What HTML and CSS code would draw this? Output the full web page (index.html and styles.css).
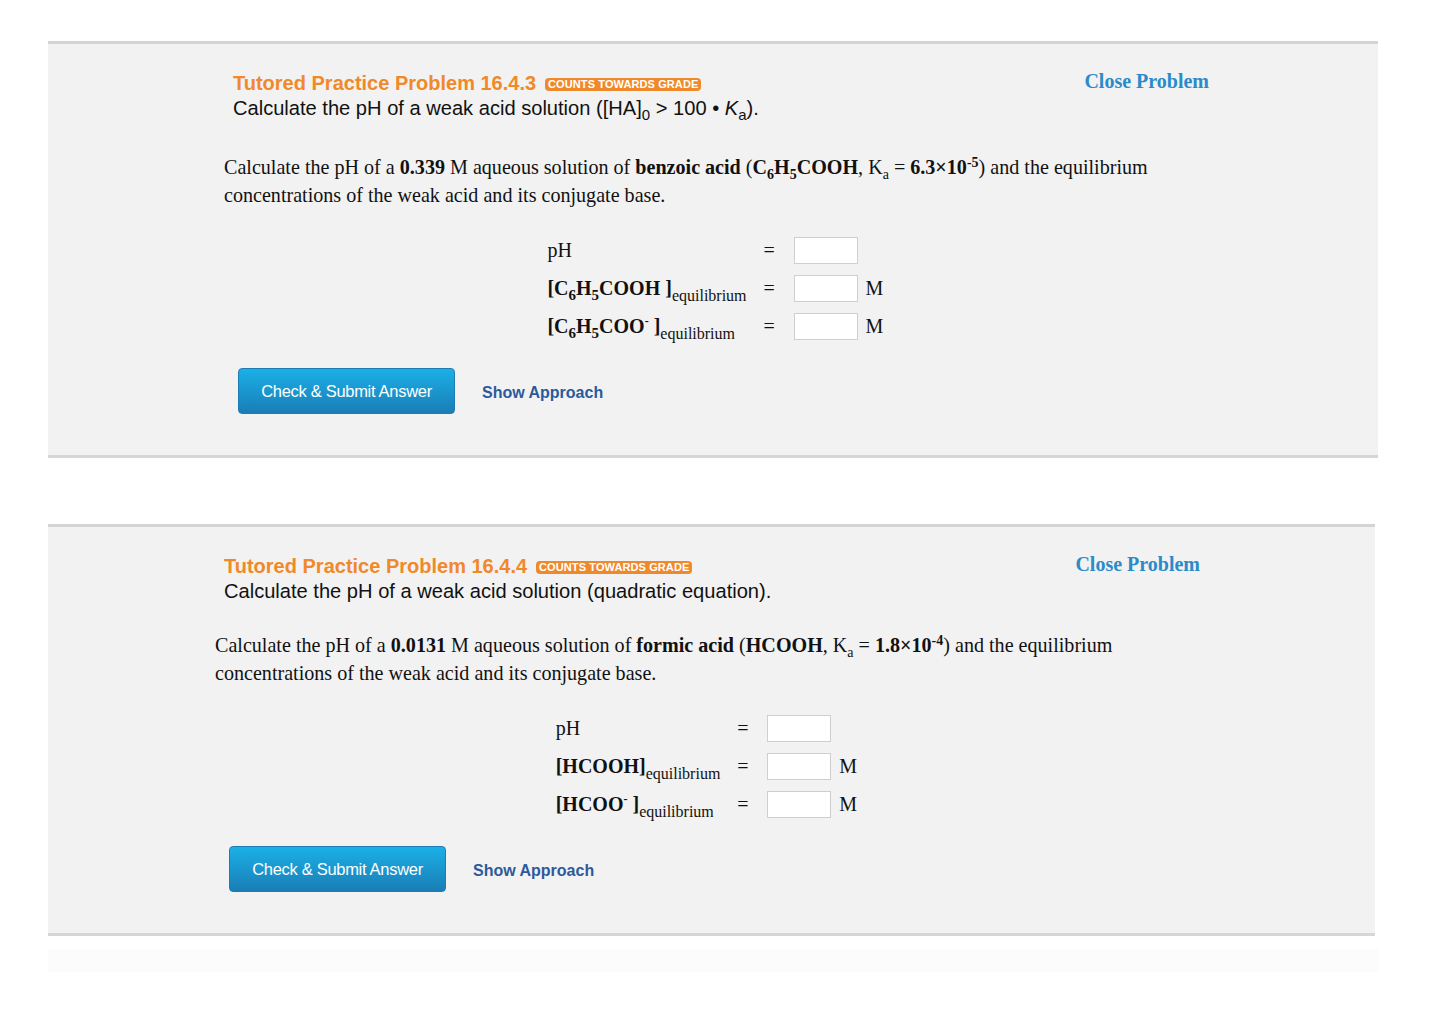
FILE: index.html
```html
<!DOCTYPE html>
<html>
<head>
<meta charset="utf-8">
<link rel="stylesheet" href="styles.css">
</head>
<body>
<div class="page">
  <section class="panel panel-a">
    <div class="content">
      <div class="head">
        <div class="titles">
          <div class="title-line"><span class="title">Tutored Practice Problem 16.4.3</span><span class="badge">COUNTS TOWARDS GRADE</span></div>
          <div class="subtitle">Calculate the pH of a weak acid solution ([HA]<sub>0</sub> &gt; 100 • <i>K</i><sub>a</sub>).</div>
        </div>
        <a class="close">Close Problem</a>
      </div>
      <p class="question">Calculate the pH of a <b>0.339</b> M aqueous solution of <b>benzoic acid</b> (<b>C<sub>6</sub>H<sub>5</sub>COOH</b>, K<sub>a</sub> = <b>6.3×10<sup>-5</sup></b>) and the equilibrium concentrations of the weak acid and its conjugate base.</p>
      <table class="answers">
        <tr><td class="lbl">pH</td><td class="eq">=</td><td><span class="box"></span></td><td class="unit"></td></tr>
        <tr><td class="lbl"><b>[C<sub>6</sub>H<sub>5</sub>COOH ]</b><sub>equilibrium</sub></td><td class="eq">=</td><td><span class="box"></span></td><td class="unit">M</td></tr>
        <tr><td class="lbl"><b>[C<sub>6</sub>H<sub>5</sub>COO<sup>-</sup> ]</b><sub>equilibrium</sub></td><td class="eq">=</td><td><span class="box"></span></td><td class="unit">M</td></tr>
      </table>
      <div class="actions">
        <button class="submit">Check &amp; Submit Answer</button>
        <a class="approach">Show Approach</a>
      </div>
    </div>
  </section>

  <section class="panel panel-b">
    <div class="content">
      <div class="head">
        <div class="titles">
          <div class="title-line"><span class="title">Tutored Practice Problem 16.4.4</span><span class="badge">COUNTS TOWARDS GRADE</span></div>
          <div class="subtitle">Calculate the pH of a weak acid solution (quadratic equation).</div>
        </div>
        <a class="close">Close Problem</a>
      </div>
      <p class="question">Calculate the pH of a <b>0.0131</b> M aqueous solution of <b>formic acid</b> (<b>HCOOH</b>, K<sub>a</sub> = <b>1.8×10<sup>-4</sup></b>) and the equilibrium concentrations of the weak acid and its conjugate base.</p>
      <table class="answers">
        <tr><td class="lbl">pH</td><td class="eq">=</td><td><span class="box"></span></td><td class="unit"></td></tr>
        <tr><td class="lbl"><b>[HCOOH]</b><sub>equilibrium</sub></td><td class="eq">=</td><td><span class="box"></span></td><td class="unit">M</td></tr>
        <tr><td class="lbl"><b>[HCOO<sup>-</sup> ]</b><sub>equilibrium</sub></td><td class="eq">=</td><td><span class="box"></span></td><td class="unit">M</td></tr>
      </table>
      <div class="actions">
        <button class="submit">Check &amp; Submit Answer</button>
        <a class="approach">Show Approach</a>
      </div>
    </div>
  </section>
  <div class="ghost"></div>
</div>
</body>
</html>
```

FILE: styles.css
```css
html, body {
  margin: 0;
  padding: 0;
  background: #ffffff;
}
.page {
  padding: 41px 0 0 48px;
  width: 1330px;
}
.panel {
  background: #f2f2f2;
  border-top: 3px solid #d4d4d4;
  border-bottom: 3px solid #d6d6d6;
}
.panel-a {
  width: 1330px;
  padding: 0 169px 0 176px;
  box-sizing: border-box;
  height: 417px;
}
.panel-b {
  width: 1327px;
  padding: 0 175px 0 167px;
  box-sizing: border-box;
  height: 412px;
  margin-top: 66px;
}
.content {
  padding-top: 27px;
}
.head {
  display: flex;
  justify-content: space-between;
  align-items: flex-start;
  padding-left: 9px;
}
.title-line {
  display: flex;
  align-items: center;
  height: 24px;
}
.title {
  font-family: "Liberation Sans", Arial, sans-serif;
  font-weight: bold;
  font-size: 20px;
  color: #f0892a;
}
.badge {
  margin-left: 9px;
  margin-top: 3px;
  background: #ef8a2c;
  color: #fff;
  font-family: "Liberation Sans", Arial, sans-serif;
  font-weight: bold;
  font-size: 11px;
  line-height: 13px;
  height: 13px;
  padding: 0 3px;
  border-radius: 4px;
  letter-spacing: 0.1px;
}
.subtitle {
  font-family: "Liberation Sans", Arial, sans-serif;
  font-size: 20.1px;
  color: #111;
  line-height: 27px;
}
.subtitle sub {
  font-size: 15px;
  line-height: 0;
  vertical-align: -5px;
}
.close {
  font-family: "Liberation Serif", "Times New Roman", serif;
  font-weight: bold;
  font-size: 20px;
  color: #2b8bc9;
  line-height: 24px;
  margin-top: -2px;
}
.question {
  margin: 26px 0 0 0;
  font-family: "Liberation Serif", "Times New Roman", serif;
  font-size: 20.1px;
  line-height: 28px;
  color: #111;
}
.panel-a .question {
  margin-top: 31px;
}
.question sub, .question sup {
  font-size: 14px;
  line-height: 0;
}
.question sub { vertical-align: -5px; }
.question sup { vertical-align: 7px; }
.answers {
  margin: 22px auto 0 auto;
  border-collapse: collapse;
  font-family: "Liberation Serif", "Times New Roman", serif;
  font-size: 20px;
  color: #111;
}
.answers td {
  padding: 0;
  height: 38px;
  vertical-align: middle;
}
.answers .lbl {
  padding-right: 17px;
  white-space: nowrap;
}
.answers .eq {
  width: 30px;
  text-align: left;
}
.answers sub {
  font-size: 16px;
  line-height: 0;
  vertical-align: -6px;
}
.answers b sub {
  font-size: 15px;
  vertical-align: -5px;
}
.answers sup {
  font-size: 12px;
  line-height: 0;
  vertical-align: 8px;
}
.box {
  display: block;
  width: 62px;
  height: 25px;
  background: #fff;
  border: 1px solid #cfcfcf;
}
.answers .unit {
  padding-left: 8px;
  width: 20px;
}
.actions {
  display: flex;
  align-items: center;
  margin-top: 23px;
  padding-left: 14px;
}
.submit {
  width: 217px;
  height: 46px;
  border: 1px solid #1d7db3;
  border-radius: 4px;
  background: linear-gradient(#1bb0e6, #1a7db6);
  color: #fff;
  font-family: "Liberation Sans", Arial, sans-serif;
  font-size: 16.5px;
  letter-spacing: -0.3px;
  padding: 0;
}
.approach {
  margin-left: 27px;
  margin-top: 3px;
  font-family: "Liberation Sans", Arial, sans-serif;
  font-weight: bold;
  font-size: 16px;
  color: #2c5a9c;
}
.ghost {
  margin-top: 13px;
  height: 23px;
  background: #fcfcfc;
  width: 1330px;
}
```
